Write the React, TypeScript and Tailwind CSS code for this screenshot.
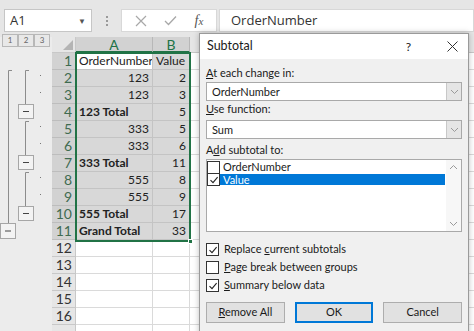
import React from "react";

type Row = { a: string; b: string; bold?: boolean; head?: boolean };

const rows: Row[] = [
  { a: "OrderNumber", b: "Value", head: true },
  { a: "123", b: "2" },
  { a: "123", b: "3" },
  { a: "123 Total", b: "5", bold: true },
  { a: "333", b: "5" },
  { a: "333", b: "6" },
  { a: "333 Total", b: "11", bold: true },
  { a: "555", b: "8" },
  { a: "555", b: "9" },
  { a: "555 Total", b: "17", bold: true },
  { a: "Grand Total", b: "33", bold: true },
];

const emptyRows = ["12", "13", "14", "15", "16", ""];

function Check() {
  return (
    <svg width="10" height="10" viewBox="0 0 10 10" className="absolute left-[1px] top-[1px]">
      <path d="M1.5 5.2 L4 7.6 L8.6 2.2" fill="none" stroke="#222" strokeWidth="1.1" />
    </svg>
  );
}

function Box({ checked }: { checked?: boolean }) {
  return (
    <div className="relative w-[13px] h-[13px] border border-[#333] bg-white shrink-0">
      {checked && <Check />}
    </div>
  );
}

function Chevron({ up }: { up?: boolean }) {
  return (
    <svg width="9" height="6" viewBox="0 0 9 6">
      <path
        d={up ? "M1 5 L4.5 1.5 L8 5" : "M1 1 L4.5 4.5 L8 1"}
        fill="none"
        stroke="#9a9a9a"
        strokeWidth="1"
      />
    </svg>
  );
}

function Combo({ value }: { value: string }) {
  return (
    <div className="flex h-[19px] border border-[#a9a9a9] bg-white">
      <div className="flex-1 pl-[5px] leading-[17px]">{value}</div>
      <div className="w-[15px] border-l border-[#c8c8c8] bg-[#e5e5e5] flex items-center justify-center">
        <Chevron />
      </div>
    </div>
  );
}

function OutlineGraphics() {
  // rows are 17px tall, row 1 starts at y=0
  const top = (n: number) => 17 * (n - 1);
  const groups = [
    [2, 4],
    [5, 7],
    [8, 10],
  ];
  const dots = [2, 3, 5, 6, 8, 9];
  return (
    <svg width="52" height="280" viewBox="0 0 52 280">
      {/* level 1 */}
      <path d={`M12 ${top(2) + 3.5} H8.5 V${top(11) + 3}`} fill="none" stroke="#8c8c8c" />
      <rect x="0.5" y={top(11) + 3.5} width="15" height="15" fill="#f3f3f3" stroke="#a6a6a6" />
      <path d={`M5 ${top(11) + 11} H11`} stroke="#444" />
      {/* level 2 */}
      {groups.map(([s, e]) => (
        <g key={s}>
          <path d={`M29 ${top(s) + 3.5} H25.5 V${top(e) + 3}`} fill="none" stroke="#8c8c8c" />
          <rect x="18.5" y={top(e) + 3.5} width="15" height="14" fill="#f3f3f3" stroke="#a6a6a6" />
          <path d={`M23 ${top(e) + 10.5} H29`} stroke="#444" />
        </g>
      ))}
      {dots.map((d) => (
        <rect key={d} x="40" y={top(d) + 8} width="1" height="1" fill="#777" />
      ))}
    </svg>
  );
}

export default function App() {
  return (
    <div className="relative w-[474px] h-[331px] overflow-hidden bg-[#e6e6e6] font-['Lato',sans-serif] text-[#222]">
      {/* formula bar */}
      <div className="h-[37px] flex items-start pt-[9px] pl-[4px]">
        <div className="w-[88px] h-[23px] bg-white border border-[#c6c6c6] flex items-center justify-between pl-[5px] pr-[5px] font-['Open_Sans',sans-serif] text-[13px] text-[#333]">
          <span>A1</span>
          <span className="text-[8px] text-[#555]">▼</span>
        </div>
        <div className="w-[29px] h-[23px] flex flex-col items-center justify-center gap-[2px]">
          <div className="w-[2px] h-[2px] bg-[#999]" />
          <div className="w-[2px] h-[2px] bg-[#999]" />
          <div className="w-[2px] h-[2px] bg-[#999]" />
        </div>
        <div className="w-[96px] h-[23px] bg-white border border-[#d8d8d8] flex items-center justify-around px-[4px]">
          <svg width="12" height="12" viewBox="0 0 12 12">
            <path d="M1 1 L11 11 M11 1 L1 11" stroke="#a8a8a8" strokeWidth="1.2" />
          </svg>
          <svg width="13" height="11" viewBox="0 0 13 11">
            <path d="M1 6 L4.5 9.5 L12 1.5" fill="none" stroke="#a8a8a8" strokeWidth="1.3" />
          </svg>
          <span className="font-['Liberation_Serif',serif] italic text-[14px] text-[#555] leading-none">
            f<span className="text-[11px]">x</span>
          </span>
        </div>
        <div className="ml-[2px] flex-1 h-[23px] bg-white border border-[#d8d8d8] pl-[11px] flex items-center font-['Open_Sans',sans-serif] text-[13px] text-[#333]">
          OrderNumber
        </div>
      </div>

      {/* sheet */}
      <div className="flex">
        <div className="w-[52px] shrink-0 bg-[#ececec]">
          <div className="h-[16px] flex items-start pl-[2px] -mt-[3px]">
            {["1", "2", "3"].map((l) => (
              <div
                key={l}
                className="w-[16px] h-[13px] border border-[#b8b8b8] bg-[#e8e8e8] text-[8px] leading-[11px] text-center text-[#666]"
              >
                {l}
              </div>
            ))}
          </div>
          <OutlineGraphics />
        </div>

        <div className="relative flex-1 bg-white">
          {/* column headers */}
          <div className="flex h-[16px] text-[14px] leading-[15px]">
            <div className="w-[24px] bg-[#e6e6e6] border-r border-b border-[#c8c8c8] relative">
              <div className="absolute right-[2px] bottom-[2px] w-0 h-0 border-l-[10px] border-l-transparent border-b-[10px] border-b-[#b4b4b4]" />
            </div>
            <div className="w-[77px] bg-[#d2d2d2] border-r border-[#b8b8b8] border-b-2 border-b-[#217346] text-center text-[#217346]">A</div>
            <div className="w-[37px] bg-[#d2d2d2] border-r border-[#b8b8b8] border-b-2 border-b-[#217346] text-center text-[#217346]">B</div>
            <div className="flex-1 bg-[#e6e6e6] border-b border-[#c8c8c8]" />
          </div>

          {rows.map((r, i) => (
            <div key={i} className="flex h-[17px] text-[12px] leading-[16px]">
              <div className="w-[24px] bg-[#d2d2d2] border-r border-b border-[#bdbdbd] text-right pr-[3px] text-[14px] text-[#3f6b50]">
                {i + 1}
              </div>
              <div
                className={`w-[77px] border-r border-b border-[#c4c4c4] px-[3px] whitespace-nowrap overflow-hidden ${
                  r.head ? "bg-white" : "bg-[#d8d8d8]"
                } ${r.head || r.bold ? "text-left" : "text-right"} ${r.bold ? "font-bold" : ""}`}
              >
                {r.a}
              </div>
              <div
                className={`w-[37px] border-r border-b border-[#c4c4c4] px-[3px] bg-[#d8d8d8] ${
                  r.head ? "text-left" : "text-right"
                }`}
              >
                {r.b}
              </div>
              <div className="flex-1 border-b border-[#dadada]" />
            </div>
          ))}

          {emptyRows.map((n, i) => (
            <div key={i} className="flex h-[17px] text-[14px] leading-[16px]">
              <div className="w-[24px] bg-[#e6e6e6] border-r border-b border-[#c8c8c8] text-right pr-[3px] text-[#333]">
                {n}
              </div>
              <div className="w-[77px] border-r border-b border-[#dadada]" />
              <div className="w-[37px] border-r border-b border-[#dadada]" />
              <div className="flex-1 border-b border-[#dadada]" />
            </div>
          ))}

          {/* selection outline */}
          <div className="absolute left-[23px] top-[15px] w-[116px] h-[190px] border-2 border-[#217346] pointer-events-none" />
          <div className="absolute left-[136px] top-[202px] w-[5px] h-[5px] bg-[#217346] border border-white" />
        </div>
      </div>

      {/* Subtotal dialog */}
      <div className="absolute left-[199px] top-[33px] w-[270px] h-[310px] border border-[#9a9a9a] bg-[#f0f0f0] shadow-[0_0_6px_rgba(0,0,0,0.25)] font-['Lato',sans-serif] text-[11px] text-[#1a1a1a]">
        <div className="h-[25px] bg-white flex items-center pl-[7px] pr-[10px] text-[12.5px]">
          <span className="flex-1">Subtotal</span>
          <span className="text-[12px] mr-[36px]">?</span>
          <svg width="11" height="11" viewBox="0 0 11 11">
            <path d="M0.5 0.5 L10.5 10.5 M10.5 0.5 L0.5 10.5" stroke="#333" strokeWidth="1" />
          </svg>
        </div>
        <div className="flex flex-col px-[6px]">
          <div className="mt-[7px] h-[14px] leading-[14px]">
            <span className="underline">A</span>t each change in:
          </div>
          <div className="mt-[2px]">
            <Combo value="OrderNumber" />
          </div>
          <div className="mt-[1px] h-[14px] leading-[14px]">
            <span className="underline">U</span>se function:
          </div>
          <div className="mt-[4px]">
            <Combo value="Sum" />
          </div>
          <div className="mt-[4px] h-[14px] leading-[14px]">
            A<span className="underline">d</span>d subtotal to:
          </div>
          <div className="mt-[2px] h-[73px] border border-[#a9a9a9] bg-white flex">
            <div className="flex-1 flex flex-col pt-[1px]">
              <div className="flex items-center h-[12px]">
                <Box />
                <span className="pl-[3px]">OrderNumber</span>
              </div>
              <div className="flex items-center h-[12px]">
                <Box checked />
                <span className="flex-1 bg-[#0078d7] text-white pl-[3px] leading-[11px]">Value</span>
              </div>
            </div>
            <div className="w-[15px] ml-[1px] flex flex-col items-center justify-between py-[4px] bg-[#f7f7f7]">
              <Chevron up />
              <Chevron />
            </div>
          </div>
          <div className="mt-[10px] flex flex-col gap-[4px]">
            <div className="flex items-center gap-[5px] h-[14px]">
              <Box checked />
              <span>
                Replace <span className="underline">c</span>urrent subtotals
              </span>
            </div>
            <div className="flex items-center gap-[5px] h-[14px]">
              <Box />
              <span>
                <span className="underline">P</span>age break between groups
              </span>
            </div>
            <div className="flex items-center gap-[5px] h-[14px]">
              <Box checked />
              <span>
                <span className="underline">S</span>ummary below data
              </span>
            </div>
          </div>
          <div className="mt-[10px] flex gap-[10px]">
            <div className="w-[80px] h-[21px] border border-[#adadad] bg-[#e1e1e1] flex items-center justify-center">
              <span>
                <span className="underline">R</span>emove All
              </span>
            </div>
            <div className="w-[80px] h-[21px] border-2 border-[#0078d7] bg-[#e1e1e1] flex items-center justify-center">
              OK
            </div>
            <div className="w-[80px] h-[21px] border border-[#adadad] bg-[#e1e1e1] flex items-center justify-center">
              Cancel
            </div>
          </div>
        </div>
      </div>
    </div>
  );
}
